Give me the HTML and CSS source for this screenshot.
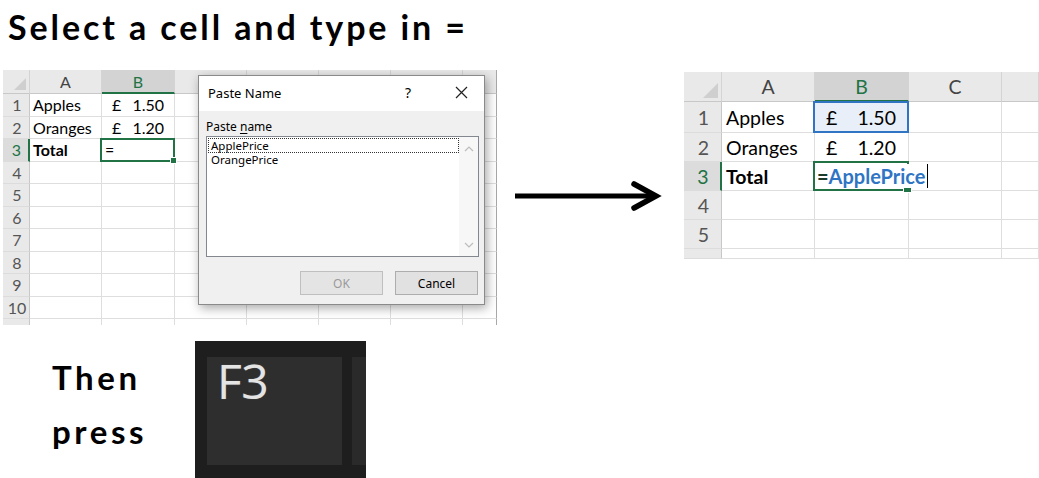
FILE: index.html
```html
<!DOCTYPE html>
<html lang="en">
<head>
<meta charset="utf-8">
<title>Paste Name with F3</title>
<link rel="stylesheet" href="styles.css">
</head>
<body>
<div class="page">
  <h1 class="title">Select a cell and type in =</h1>

  <div class="row-top">
    <div class="sheet sheet-left">
      <div class="grid grid-left">
        <div class="hd corner"></div><div class="hd">A</div><div class="hd hd-sel">B</div><div class="hd"></div><div class="hd"></div><div class="hd"></div><div class="hd"></div><div class="hd hd-edge"></div>

        <div class="rh">1</div><div class="c">Apples</div><div class="c acct"><span>£</span><span>1.50</span></div><div class="c"></div><div class="c"></div><div class="c"></div><div class="c"></div><div class="c c-edge"></div>
        <div class="rh">2</div><div class="c">Oranges</div><div class="c acct"><span>£</span><span>1.20</span></div><div class="c"></div><div class="c"></div><div class="c"></div><div class="c"></div><div class="c c-edge"></div>
        <div class="rh rh-sel">3</div><div class="c bold">Total</div><div class="c sel">=</div><div class="c"></div><div class="c"></div><div class="c"></div><div class="c"></div><div class="c c-edge"></div>
        <div class="rh">4</div><div class="c"></div><div class="c"></div><div class="c"></div><div class="c"></div><div class="c"></div><div class="c"></div><div class="c c-edge"></div>
        <div class="rh">5</div><div class="c"></div><div class="c"></div><div class="c"></div><div class="c"></div><div class="c"></div><div class="c"></div><div class="c c-edge"></div>
        <div class="rh">6</div><div class="c"></div><div class="c"></div><div class="c"></div><div class="c"></div><div class="c"></div><div class="c"></div><div class="c c-edge"></div>
        <div class="rh">7</div><div class="c"></div><div class="c"></div><div class="c"></div><div class="c"></div><div class="c"></div><div class="c"></div><div class="c c-edge"></div>
        <div class="rh">8</div><div class="c"></div><div class="c"></div><div class="c"></div><div class="c"></div><div class="c"></div><div class="c"></div><div class="c c-edge"></div>
        <div class="rh">9</div><div class="c"></div><div class="c"></div><div class="c"></div><div class="c"></div><div class="c"></div><div class="c"></div><div class="c c-edge"></div>
        <div class="rh">10</div><div class="c"></div><div class="c"></div><div class="c"></div><div class="c"></div><div class="c"></div><div class="c"></div><div class="c c-edge"></div>
        <div class="rh"></div><div class="c"></div><div class="c"></div><div class="c"></div><div class="c"></div><div class="c"></div><div class="c"></div><div class="c c-edge"></div>
      </div>

      <div class="dialog">
        <div class="dlg-title">
          <span class="dlg-name">Paste Name</span>
          <span class="dlg-help">?</span>
          <svg class="dlg-close" width="13" height="13" viewBox="0 0 13 13"><path d="M1 1 L12 12 M12 1 L1 12" stroke="#222" stroke-width="1.2" fill="none"/></svg>
        </div>
        <div class="dlg-body">
          <div class="dlg-label">Paste <u>n</u>ame</div>
          <div class="listbox">
            <div class="list-items">
              <div class="item focus">ApplePrice</div>
              <div class="item">OrangePrice</div>
            </div>
            <div class="scrollbar">
              <svg width="10" height="6" viewBox="0 0 10 6"><path d="M1 5 L5 1 L9 5" stroke="#bdbdbd" stroke-width="1.2" fill="none"/></svg>
              <svg width="10" height="6" viewBox="0 0 10 6"><path d="M1 1 L5 5 L9 1" stroke="#bdbdbd" stroke-width="1.2" fill="none"/></svg>
            </div>
          </div>
          <div class="dlg-buttons">
            <div class="btn btn-disabled">OK</div>
            <div class="btn">Cancel</div>
          </div>
        </div>
      </div>
    </div>

    <div class="arrow-wrap">
      <svg width="187" height="255" viewBox="0 0 187 255">
        <line x1="18" y1="126" x2="157" y2="126" stroke="#000" stroke-width="5"/>
        <polyline points="137,114 159,126 137,138" stroke="#000" stroke-width="5.5" fill="none" stroke-linecap="round" stroke-linejoin="miter"/>
      </svg>
    </div>

    <div class="sheet sheet-right">
      <div class="grid grid-right">
        <div class="hd corner"></div><div class="hd">A</div><div class="hd hd-sel">B</div><div class="hd">C</div><div class="hd"></div>

        <div class="rh">1</div><div class="c">Apples</div><div class="c acct ref"><span>£</span><span>1.50</span></div><div class="c"></div><div class="c"></div>
        <div class="rh">2</div><div class="c">Oranges</div><div class="c acct"><span>£</span><span>1.20</span></div><div class="c"></div><div class="c"></div>
        <div class="rh rh-sel">3</div><div class="c bold">Total</div><div class="c sel"><span class="edit">=<span class="edit-ref">ApplePrice</span></span></div><div class="c"></div><div class="c"></div>
        <div class="rh">4</div><div class="c"></div><div class="c"></div><div class="c"></div><div class="c"></div>
        <div class="rh">5</div><div class="c"></div><div class="c"></div><div class="c"></div><div class="c"></div>
        <div class="rh"></div><div class="c"></div><div class="c"></div><div class="c"></div><div class="c"></div>
      </div>
    </div>
  </div>

  <div class="row-bottom">
    <div class="then">Then<br>press</div>
    <div class="key">
      <div class="key-face">F3</div>
      <div class="key-next"></div>
    </div>
  </div>
</div>
</body>
</html>
```

FILE: styles.css
```css
* { box-sizing: border-box; }

body {
  margin: 0;
  background: #fff;
  font-family: Lato, "Liberation Sans", sans-serif;
  color: #000;
}

.page {
  width: 1039px;
  height: 478px;
  overflow: hidden;
}

.title {
  margin: 0;
  height: 70px;
  padding: 7px 0 0 8px;
  font: 700 34px/40px Lato, "Liberation Sans", sans-serif;
  letter-spacing: 2.9px;
}

.row-top {
  display: flex;
  align-items: flex-start;
  height: 271px;
}

/* ---------- spreadsheets ---------- */
.sheet {
  position: relative;
  background: #fff;
  overflow: hidden;
}

.sheet-left {
  margin-left: 3px;
  width: 494px;
  height: 255px;
  font-size: 16px;
}

.sheet-right {
  margin-top: 2px;
  width: 355px;
  height: 187px;
  font-size: 19.5px;
}

.grid {
  display: grid;
}

.grid-left {
  grid-template-columns: 27px 72px 73px 72px 72px 72px 72px 34px;
  grid-template-rows: 24px repeat(10, 22.5px) 8px;
}

.grid-right {
  grid-template-columns: 38px 93px 94px 93px 37px;
  grid-template-rows: 30px 31px 29px 29px 29px 29px 10px;
}

.hd {
  background: #e9e9e9;
  border-right: 1px solid #d4d4d4;
  border-bottom: 1px solid #c8c8c8;
  color: #444;
  display: flex;
  align-items: center;
  justify-content: center;
}

.hd-sel {
  background: #d3d3d3;
  color: #217346;
  border-bottom: 2px solid #217346;
}

.corner {
  position: relative;
}

.corner::after {
  content: "";
  position: absolute;
  right: 3px;
  bottom: 3px;
  width: 12px;
  height: 12px;
  background: #cfcfcf;
  clip-path: polygon(100% 0, 100% 100%, 0 100%);
}

.grid-right .corner::after {
  width: 15px;
  height: 15px;
}

.hd-edge {
  border-right: 1px solid #a8a8a8;
}

.rh {
  background: #e9e9e9;
  border-right: 1px solid #c8c8c8;
  border-bottom: 1px solid #dcdcdc;
  color: #555;
  display: flex;
  align-items: center;
  justify-content: center;
  padding-left: 2px;
}

.rh-sel {
  background: #dcdcdc;
  color: #217346;
  border-right: 2px solid #217346;
}

.c {
  position: relative;
  border-right: 1px solid #dedede;
  border-bottom: 1px solid #dedede;
  display: flex;
  align-items: center;
  padding-left: 3px;
  white-space: nowrap;
}

.grid-right .c {
  padding-left: 4px;
}

.c-edge {
  border-right: 1px solid #a8a8a8;
}

.bold {
  font-weight: 700;
}

.acct {
  justify-content: space-between;
  padding: 0 10px 0 10px;
}

.grid-right .acct {
  padding: 0 12px 0 11px;
}

.ref {
  background: #e8eff8;
}

.ref::after {
  content: "";
  position: absolute;
  inset: -1px -1px -1px -2px;
  border: 2px solid #2f75c4;
}

.sel::after {
  content: "";
  position: absolute;
  inset: -1px -1px -1px -2px;
  border: 2px solid #217346;
}

.sel::before {
  content: "";
  position: absolute;
  right: -3px;
  bottom: -3px;
  width: 5px;
  height: 5px;
  background: #217346;
  border: 1px solid #fff;
  z-index: 2;
}

.grid-right .sel::before {
  width: 7px;
  height: 6px;
  right: -4px;
  bottom: -3px;
}

.edit {
  position: relative;
  z-index: 3;
  background: #fff;
  padding-right: 1px;
  border-right: 1.5px solid #000;
  margin-left: -2px;
  line-height: 24px;
  font-size: 20px;
  font-weight: 700;
  color: #1b3d2a;
}

.edit-ref {
  color: #2f75c4;
}

/* ---------- dialog ---------- */
.dialog {
  position: absolute;
  left: 195px;
  top: 5px;
  width: 287px;
  height: 230px;
  background: #f0f0f0;
  border: 1px solid #8a8a8a;
  box-shadow: 2px 3px 10px rgba(0, 0, 0, 0.35);
  font-family: "Noto Sans", "Open Sans", sans-serif;
  color: #000;
  display: flex;
  flex-direction: column;
}

.dlg-title {
  height: 35px;
  background: #fff;
  display: flex;
  align-items: center;
  padding-left: 9px;
  padding-bottom: 2px;
  font-size: 13px;
}

.dlg-name {
  flex: 1;
}

.dlg-help {
  width: 12px;
  font-size: 14px;
  margin-right: 38px;
}

.dlg-close {
  margin-right: 16px;
}

.dlg-body {
  flex: 1;
  padding: 6px 5px 0 7px;
  font-size: 12px;
  display: flex;
  flex-direction: column;
}

.dlg-label {
  line-height: 19px;
}

.dlg-label u {
  text-underline-offset: 2px;
}

.listbox {
  height: 121px;
  background: #fff;
  border: 1px solid #828790;
  display: flex;
}

.list-items {
  flex: 1;
  padding-top: 1px;
}

.item {
  height: 14px;
  line-height: 14px;
  padding-left: 3px;
  margin-left: 1px;
  font-size: 11.5px;
}

.item.focus {
  border: 1px dotted #333;
  height: 15px;
  line-height: 13px;
  padding-left: 2px;
}

.scrollbar {
  width: 19px;
  background: #f7f7f7;
  display: flex;
  flex-direction: column;
  justify-content: space-between;
  align-items: center;
  padding: 9px 0 8px;
}

.dlg-buttons {
  display: flex;
  justify-content: flex-end;
  gap: 12px;
  margin-top: 14px;
  padding-right: 1px;
}

.btn {
  width: 83px;
  height: 24px;
  background: #e1e1e1;
  border: 1px solid #adadad;
  display: flex;
  align-items: center;
  justify-content: center;
  font-size: 12px;
}

.btn-disabled {
  color: #9a9a9a;
  border-color: #bfbfbf;
  background: #e4e4e4;
}

/* ---------- arrow ---------- */
.arrow-wrap {
  width: 187px;
  height: 255px;
}

.arrow-wrap svg {
  display: block;
}

/* ---------- bottom row ---------- */
.row-bottom {
  display: flex;
  align-items: flex-start;
}

.then {
  width: 195px;
  padding: 9px 0 0 52px;
  font: 700 33px/54px Lato, "Liberation Sans", sans-serif;
  letter-spacing: 3.6px;
}

.key {
  width: 171px;
  height: 137px;
  background: #1e1e1e;
  display: flex;
  gap: 10px;
  padding: 16px 0 0 12px;
  overflow: hidden;
}

.key-face {
  flex: none;
  width: 135px;
  height: 108px;
  background: #2e2e2e;
  color: #e4e4e4;
  font: 400 48px/1 "Open Sans", "Noto Sans", sans-serif;
  letter-spacing: -0.5px;
  padding: 0 0 0 10px;
  text-shadow: 0 0 1px rgba(255, 255, 255, 0.4);
}

.key-next {
  flex: none;
  width: 40px;
  height: 108px;
  background: #2a2a2a;
}
```
